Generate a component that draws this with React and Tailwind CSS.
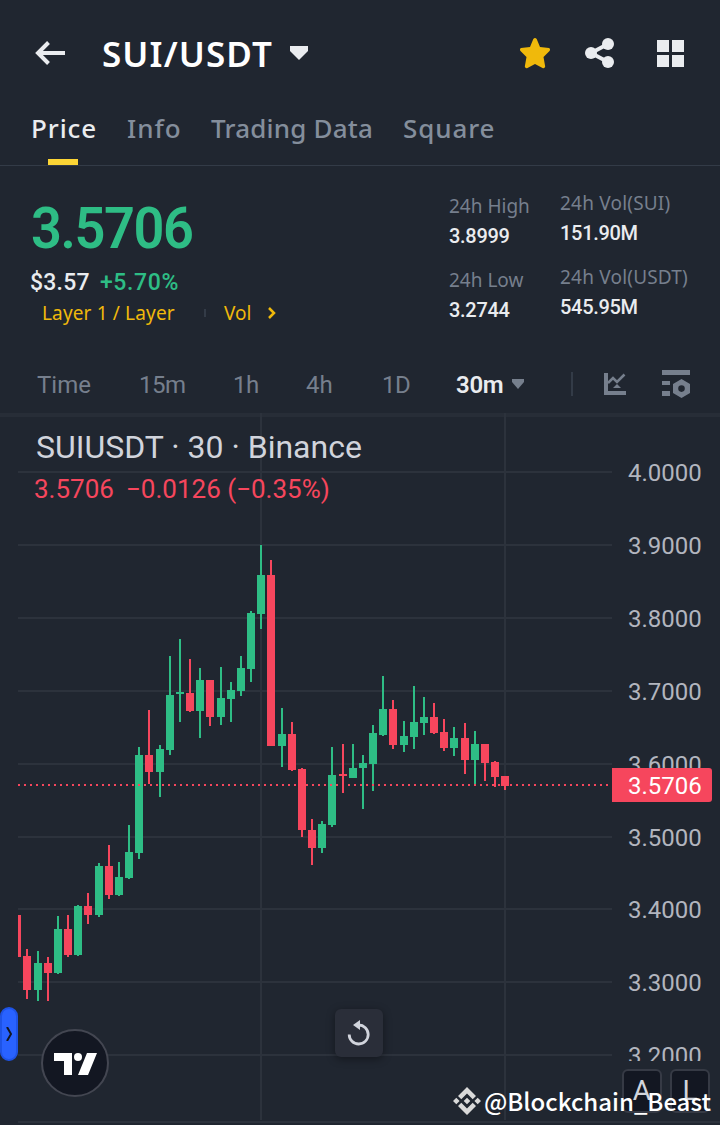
const UP = "#2ebd85";
const DOWN = "#f6465d";

// [x, high, open/close top, open/close bottom, low, rising]
const candles = [
  [13, 915, 915, 957, 957, 0],
  [23, 949, 956, 990, 999, 0],
  [34, 951, 963, 990, 1001, 1],
  [44, 957, 963, 973, 1001, 0],
  [54, 916, 929, 973, 974, 1],
  [64, 915, 929, 955, 957, 0],
  [74, 905, 906, 955, 956, 1],
  [84, 893, 906, 915, 924, 0],
  [95, 863, 866, 915, 917, 1],
  [105, 845, 866, 895, 899, 0],
  [115, 862, 877, 895, 896, 1],
  [125, 825, 852, 878, 879, 1],
  [135, 747, 755, 853, 859, 1],
  [145, 710, 755, 772, 784, 0],
  [156, 745, 749, 772, 797, 1],
  [166, 656, 695, 750, 755, 1],
  [176, 639, 692, 694, 722, 1],
  [186, 659, 693, 711, 712, 0],
  [196, 668, 680, 711, 738, 1],
  [206, 680, 680, 717, 726, 0],
  [217, 667, 698, 717, 725, 1],
  [227, 682, 690, 699, 722, 1],
  [237, 656, 668, 691, 696, 1],
  [247, 611, 613, 669, 682, 1],
  [257, 545, 575, 614, 629, 1],
  [267, 560, 575, 746, 746, 0],
  [278, 708, 734, 746, 767, 1],
  [288, 722, 734, 770, 771, 0],
  [298, 768, 769, 830, 837, 0],
  [308, 819, 830, 848, 865, 0],
  [318, 821, 824, 848, 853, 1],
  [328, 747, 775, 825, 827, 1],
  [339, 744, 774, 776, 793, 0],
  [349, 744, 768, 778, 778, 1],
  [359, 755, 763, 768, 809, 1],
  [369, 725, 733, 764, 791, 1],
  [379, 676, 709, 735, 736, 1],
  [389, 700, 709, 745, 749, 0],
  [400, 721, 736, 745, 752, 1],
  [410, 686, 722, 737, 749, 1],
  [420, 697, 717, 723, 735, 1],
  [430, 703, 717, 733, 734, 0],
  [440, 719, 732, 748, 751, 0],
  [450, 727, 738, 748, 756, 1],
  [461, 723, 738, 760, 774, 0],
  [471, 731, 744, 760, 785, 1],
  [481, 744, 744, 763, 781, 0],
  [491, 761, 762, 777, 787, 0],
  [501, 776, 776, 786, 790, 0],
];

const priceTicks = [
  { label: "4.0000", y: 472 },
  { label: "3.9000", y: 545 },
  { label: "3.8000", y: 618 },
  { label: "3.7000", y: 691 },
  { label: "3.6000", y: 764 },
  { label: "3.5000", y: 837 },
  { label: "3.4000", y: 909 },
  { label: "3.3000", y: 982 },
  { label: "3.2000", y: 1055 },
];

function Header() {
  return (
    <header className="flex h-[106px] items-center pl-[35px] pr-9">
      <svg width="30" height="24" viewBox="0 0 30 24" fill="none" stroke="#eaecef" strokeWidth="4">
        <path d="M30 12H3M13.5 1.5L3 12l10.500 10.500" />
      </svg>
      <h1 className="ml-[37px] w-[172px] whitespace-nowrap text-[35px] font-semibold leading-none tracking-[1.1px] text-white">
        SUI/USDT
      </h1>
      <svg className="ml-4" width="18" height="14" viewBox="0 0 18 14" fill="#eaecef">
        <path d="M0 0h18v5L9 14 0 5z" />
      </svg>
      <div className="ml-auto flex items-center">
        <svg width="30" height="31" viewBox="0 0 30 31" fill="#f0b90b">
          <path d="M13.300 1Q15-.8 16.700 1L20 9l9 1.100q1.800 1 .5 2.900L23.500 19l1.700 9.500q-.5 2.200-2.700 1.500L15 26l-7.500 4q-2.200.7-2.700-1.500L6.500 19 .5 13Q-.8 11.100 1 10.100L10 9z" />
        </svg>
        <svg className="ml-[35px]" width="29" height="30" viewBox="0 0 29 30" fill="#eaecef">
          <path d="M6 15L23 6M6 15l17 9" stroke="#eaecef" strokeWidth="3.800" />
          <circle cx="6" cy="15" r="6" />
          <circle cx="23" cy="6" r="6" />
          <circle cx="23" cy="24" r="6" />
        </svg>
        <div className="ml-[43px] grid grid-cols-2 gap-[3px]">
          <span className="size-3 bg-[#eaecef]" />
          <span className="size-3 bg-[#eaecef]" />
          <span className="size-3 bg-[#eaecef]" />
          <span className="size-3 bg-[#eaecef]" />
        </div>
      </div>
    </header>
  );
}

function Tabs() {
  return (
    <nav className="flex h-[60px] border-b border-[#333b47] pl-[31px] text-[26px] font-medium leading-[44px] text-[#848e9c]">
      <div className="flex w-[96px] flex-col text-[#eaecef]">
        <span className="h-[53px] whitespace-nowrap tracking-[0.9px]">Price</span>
        <span className="ml-[17px] h-1.5 w-[30px] bg-[#fcd535]" />
      </div>
      <span className="w-[84px] whitespace-nowrap tracking-[1px]">Info</span>
      <span className="w-[192px] whitespace-nowrap tracking-[0.2px]">Trading Data</span>
      <span className="whitespace-nowrap tracking-[0.9px]">Square</span>
    </nav>
  );
}

function Stat({ label, value }) {
  return (
    <div className="h-[74px] whitespace-nowrap">
      <p className="text-[19px] leading-[29px] text-[#767f8d]">{label}</p>
      <p className="pt-px font-[Roboto] text-[20px] font-medium leading-[29px] tracking-[-0.3px] text-[#eaecef]">
        {value}
      </p>
    </div>
  );
}

function Summary() {
  return (
    <section className="flex h-[189px]">
      <div className="w-[449px] pl-[31px] pt-[31px]">
        <p className="origin-left scale-x-[0.95] font-[Roboto] text-[57px] font-semibold leading-[64px] tracking-[-1.500px] text-[#2ebd85]">
          3.5706
        </p>
        <p className="-ml-px mt-[7px] flex whitespace-nowrap font-[Roboto] text-[23px] font-medium leading-[30px]">
          <span className="w-[70px] tracking-[0.2px] text-[#eaecef]">$3.57</span>
          <span className="tracking-[0.6px] text-[#2ebd85]">+5.70%</span>
        </p>
        <p className="-mt-px flex items-center whitespace-nowrap pl-[11px] text-[19px] leading-8 text-[#f0b90b]">
          <span className="w-[162px] tracking-[0.15px]">Layer 1 / Layer</span>
          <span className="h-2 w-0.5 bg-[#333b47]" />
          <span className="ml-[18px] w-[44px]">Vol</span>
          <svg width="8" height="12" viewBox="0 0 8 12" fill="none" stroke="#f0b90b" strokeWidth="2.500">
            <path d="M1 1l5 5-5 5" />
          </svg>
        </p>
      </div>
      <div className="w-[111px] pt-[26px]">
        <Stat label="24h High" value="3.8999" />
        <Stat label="24h Low" value="3.2744" />
      </div>
      <div className="pt-[23px] tracking-[0.2px]">
        <Stat label="24h Vol(SUI)" value="151.90M" />
        <Stat label="24h Vol(USDT)" value="545.95M" />
      </div>
    </section>
  );
}

function Intervals() {
  return (
    <div className="flex h-[58px] items-center whitespace-nowrap pl-[37px] font-[Roboto] text-[24px] leading-none text-[#767f8d]">
      <span className="w-[102px] pt-0.5">Time</span>
      <span className="w-[94px] pt-0.5 tracking-[-0.5px]">15m</span>
      <span className="w-[73px] pt-0.5 tracking-[-0.5px]">1h</span>
      <span className="w-[76px] pt-0.5">4h</span>
      <span className="w-[74px] pt-0.5 tracking-[-0.5px]">1D</span>
      <span className="w-[56px] pt-0.5 font-semibold tracking-[-0.3px] text-[#eaecef]">30m</span>
      <svg width="12" height="10" viewBox="0 0 12 10" fill="#767f8d">
        <path d="M0 0h12v3L6 10 0 3z" />
      </svg>
      <span className="ml-[47px] h-6 w-0.5 bg-[#333b47]" />
      <svg className="ml-[31px]" width="22" height="22" viewBox="0 0 22 22" fill="none" stroke="#767f8d">
        <path d="M2 0v20h20" strokeWidth="4" />
        <path d="M4 10l5-5 4 4 7.500-7.500" strokeWidth="2.500" />
        <path d="M13 11l4 4H9z" fill="#767f8d" stroke="none" />
      </svg>
      <svg className="ml-9" width="28" height="28" viewBox="0 0 28 28" fill="#767f8d">
        <path d="M0 0h28v5H0zM0 11h8v4H0zM0 21h8v5H0z" />
        <path fillRule="evenodd" d="M19.500 9L28 14v9l-8.500 5-8.500-5v-9zM19.500 15.300a3.300 3.300 0 100 6.600 3.300 3.300 0 000-6.600z" />
      </svg>
    </div>
  );
}

function Chart() {
  return (
    <svg className="block" width="720" height="712" viewBox="0 413 720 712">
      <rect y="413" width="720" height="4" fill="#272d37" />
      {/* Grid */}
      <g fill="#2c323c">
        <rect x="260" y="413" width="2" height="707" />
        <rect x="504" y="413" width="2" height="707" />
        {priceTicks.map((t) => (
          <rect key={t.label} x="18" y={t.y - 1} width="594" height="2" />
        ))}
        <rect x="18" y="1121" width="702" height="2" />
      </g>

      {/* Candles */}
      <clipPath id="plot">
        <rect x="18" y="413" width="594" height="707" />
      </clipPath>
      <g clipPath="url(#plot)">
        {candles.map(([x, high, top, bottom, low, rising]) => (
          <g key={x} fill={rising ? UP : DOWN}>
            <rect x={x + 3} y={high} width="2" height={low - high} />
            <rect x={x} y={top} width="8" height={bottom - top} />
          </g>
        ))}
      </g>
      <path d="M18 785H612" stroke={DOWN} strokeWidth="2" strokeDasharray="2 4" />

      {/* Price axis */}
      <clipPath id="axis">
        <rect x="612" y="413" width="108" height="648" />
      </clipPath>
      <g clipPath="url(#axis)" fill="#b2b5be" fontFamily="Roboto, sans-serif" fontSize="24">
        {priceTicks.map((t) => (
          <text key={t.label} x="628" y={t.y + 9}>
            {t.label}
          </text>
        ))}
      </g>
      <path d="M612 768h97a3 3 0 013 3v28a3 3 0 01-3 3h-97z" fill={DOWN} />
      <text x="628" y="794" fill="#fff" fontFamily="Roboto, sans-serif" fontSize="24">
        3.5706
      </text>
    </svg>
  );
}

function ChartOverlays() {
  return (
    <>
      <div className="absolute left-[34px] top-[16px] whitespace-nowrap font-[Roboto]">
        <p className="pl-0.5 text-[32px] leading-[37px] text-[#d1d4dc]">SUIUSDT · 30 · Binance</p>
        <p className="mt-2 flex text-[26px] leading-[30px] text-[#f6465d]">
          <span className="w-[92px]">3.5706</span>
          <span>−0.0126 (−0.35%)</span>
        </p>
      </div>

      <div className="absolute left-0 top-[594px] flex h-[54px] w-[18px] items-center justify-center rounded-full border-2 border-[#1e53e5] bg-[#2962ff]">
        <svg width="6" height="14" viewBox="0 0 6 14" fill="none" stroke="#131722" strokeWidth="2">
          <path d="M1 0l4 7-4 7" />
        </svg>
      </div>

      <div className="absolute left-[41px] top-[616px] flex size-[68px] items-center justify-center rounded-full border-2 border-[#434651] bg-[#131722]">
        <svg className="mt-0.5" width="43" height="22" viewBox="0 0 43 22" fill="#fff">
          <path d="M0 0h18v22h-8V8H0zM33 0h10l-9 22H24z" />
          <circle cx="24" cy="4" r="4" />
        </svg>
      </div>

      <button className="absolute left-[335px] top-[596px] flex size-12 items-center justify-center rounded-md bg-[#2a2e39] shadow-[0_2px_8px_rgba(0,0,0,0.4)]">
        <svg width="24" height="26" viewBox="0 0 24 26" fill="none" stroke="#d1d4dc" strokeWidth="2.800">
          <path d="M2.200 14.500A9.500 9.500 0 1011.500 5" />
          <path d="M6 5l7-5v10z" fill="#d1d4dc" stroke="none" />
        </svg>
      </button>

      <div className="absolute left-[622px] top-[656px] flex gap-2 font-[Roboto] text-[28px] leading-[40px] text-[#d1d4dc]">
        <span className="h-11 w-10 rounded-md border-2 border-[#363a45] bg-[#131722] text-center">A</span>
        <span className="h-11 w-10 rounded-md border-2 border-[#363a45] bg-[#131722] text-center">L</span>
      </div>

      {/* Watermark */}
      <div className="absolute left-[453px] top-[670px] flex items-center whitespace-nowrap text-white">
        <svg width="28" height="28" viewBox="0 0 28 28" fill="#d9d9d9">
          <path d="M14 0l9 9-3.300 3.300L14 6.600l-5.700 5.700L5 9zM14 28l9-9-3.300-3.300-5.700 5.700-5.700-5.700L5 19zM14 10.700l3.300 3.300-3.300 3.300-3.300-3.300zM3.300 10.700L6.600 14l-3.300 3.300L0 14zM24.700 10.700L28 14l-3.300 3.300-3.300-3.300z" />
        </svg>
        <span className="ml-[3px] font-['Noto_Sans_CJK_SC',sans-serif] text-[24px] font-medium leading-9">
          @Blockchain_Beast
        </span>
      </div>
    </>
  );
}

export default function App() {
  return (
    <div className="h-[1125px] w-[720px] overflow-hidden bg-[#202630] font-['Noto_Sans',sans-serif]">
      <Header />
      <Tabs />
      <Summary />
      <Intervals />
      <div className="relative">
        <Chart />
        <ChartOverlays />
      </div>
    </div>
  );
}
